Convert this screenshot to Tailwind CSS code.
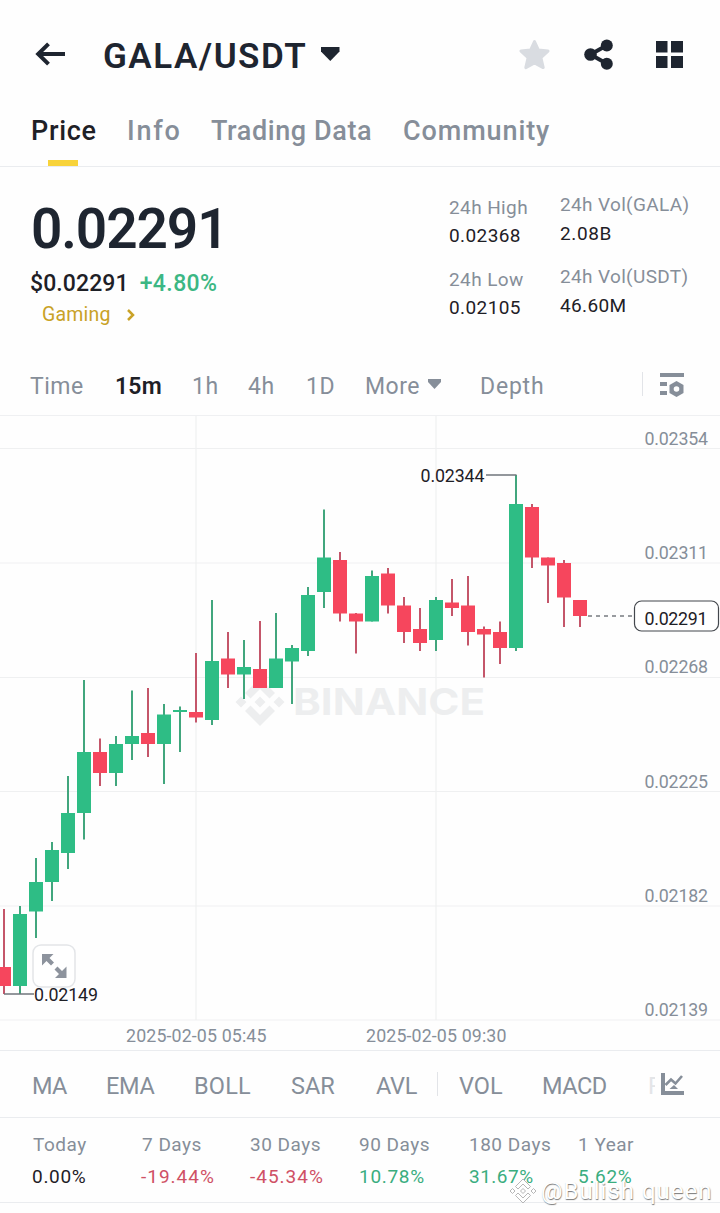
<!DOCTYPE html>
<html lang="en">
<head>
<meta charset="utf-8">
<title>GALA/USDT</title>
<script src="https://cdn.jsdelivr.net/npm/@tailwindcss/browser@4"></script>
</head>
<body class="bg-white">
<div class="relative flex h-[1213px] w-[720px] flex-col overflow-hidden bg-[#fefefe] font-['Roboto','Liberation_Sans',sans-serif] text-[#868e99]">

  <!-- Title bar -->
  <header class="flex h-[108px] items-center pl-[35px] pr-9 text-[#1e2530]">
    <svg class="h-6 w-[30px] flex-none" viewBox="0 0 30 24" fill="none" stroke="currentColor" stroke-width="4"><path d="M30 12H4M13.5 1.800 3.200 12l10.300 10.200"/></svg>
    <h1 class="ml-[38px] w-[206px] whitespace-nowrap text-[35px] leading-none font-semibold tracking-[1.5px] pt-[5px]">GALA/USDT</h1>
    <svg class="ml-3 h-[14px] w-[19px] flex-none" viewBox="0 0 19 14" fill="currentColor"><path d="M0 0h18.500v4.500L9.300 14 0 4.500z"/></svg>
    <svg class="ml-auto h-[31px] w-[31px] flex-none" viewBox="0 0 31 31" fill="#d9dce1" stroke="#d9dce1" stroke-width="3" stroke-linejoin="round"><path d="M15.500 2.500l3.900 8.600 9.600 1-7.100 6.500 2.300 10-8.700-4.600-8.700 4.600 2.300-10L2 12.100l9.600-1z"/></svg>
    <svg class="ml-[34px] h-[31px] w-[30px] flex-none" viewBox="0 0 30 31" fill="currentColor"><path d="M22.500 6.500 6.500 15.500l16 9" fill="none" stroke="currentColor" stroke-width="4"/><circle cx="6.500" cy="15.500" r="6.300"/><circle cx="22.800" cy="6.500" r="6"/><circle cx="22.800" cy="24.700" r="6"/></svg>
    <svg class="ml-[42px] mr-px h-[27px] w-[27px] flex-none" viewBox="0 0 27 27" fill="currentColor"><path d="M0 0h11.500v11.500H0zM15 0h12v11.500H15zM0 15h11.500v12H0zM15 15h12v12H15z"/></svg>
  </header>

  <!-- Tabs -->
  <nav class="flex h-[59px] flex-none border-b border-[#eaecef] pl-[31px] text-[27px] leading-[47px] font-medium whitespace-nowrap">
    <div class="flex w-[96px] flex-col text-[#1e2026]"><span class="h-[52px] tracking-[0.7px]">Price</span><i class="ml-[17px] h-[6px] w-[30px] bg-[#f8d33a]"></i></div>
    <div class="w-[84px] tracking-[1.8px]">Info</div>
    <div class="w-[192px] tracking-[0.6px]">Trading Data</div>
    <div class="tracking-[0.9px]">Community</div>
  </nav>

  <!-- Price summary -->
  <section class="flex h-[190px] flex-none pl-[31px]">
    <div class="w-[418px] pt-[32px]">
      <div class="h-[60px] text-[55px] leading-[60px] font-semibold tracking-[-1.1px] text-[#1e2530]">0.02291</div>
      <div class="mt-[10px] -ml-px flex h-[30px] gap-[11px] text-[23px] leading-[30px] font-medium"><span class="tracking-[0.1px] text-[#1e2026]">$0.02291</span><span class="tracking-[0.4px] text-[#3cb784]">+4.80%</span></div>
      <div class="ml-[11px] mt-[2px] flex h-[28px] items-center text-[19.5px] leading-[28px] tracking-[0.2px] text-[#c9a227]">Gaming<svg class="ml-[16px] h-[12px] w-[8px]" viewBox="0 0 8 12" fill="none" stroke="currentColor" stroke-width="2.500"><path d="M1 1l5 5-5 5"/></svg></div>
    </div>
    <dl class="w-[111px] pt-[27px] text-[19px] leading-[28px] tracking-[0.4px] whitespace-nowrap">
      <dt>24h High</dt><dd class="text-[#1e2026]">0.02368</dd>
      <dt class="mt-4">24h Low</dt><dd class="text-[#1e2026]">0.02105</dd>
    </dl>
    <dl class="pt-[23px] text-[19px] leading-[29px] tracking-[0.35px] whitespace-nowrap">
      <dt>24h Vol(GALA)</dt><dd class="tracking-[0.6px] text-[#1e2026]">2.08B</dd>
      <dt class="mt-[14px]">24h Vol(USDT)</dt><dd class="text-[#1e2026]">46.60M</dd>
    </dl>
  </section>

  <!-- Interval selector -->
  <nav class="flex h-[59px] flex-none border-b border-[#eff0f2] pl-[30px] text-[23px] leading-[59px] tracking-[0.5px] whitespace-nowrap">
    <span class="w-[85px]">Time</span>
    <span class="w-[77px] font-semibold tracking-[0.2px] text-[#1e2026]">15m</span>
    <span class="w-[56px]">1h</span>
    <span class="w-[58px]">4h</span>
    <span class="w-[59px]">1D</span>
    <span class="flex w-[115px]">More<svg class="mt-[22px] ml-2 h-[10px] w-[13px]" viewBox="0 0 13 10" fill="currentColor"><path d="M0 0h13v3L6.500 10 0 3z"/></svg></span>
    <span class="w-[162px] tracking-[0.8px]">Depth</span>
    <i class="mt-[15px] h-6 w-px bg-[#e2e4e8]"></i>
    <svg class="ml-[17px] mt-4 h-6 w-6" viewBox="0 0 24 24" fill="currentColor"><path d="M0 0h24v4H0zM0 9h7v4H0zM0 18h7v4H0z"/><path fill-rule="evenodd" d="M16.500 8l7 4v8l-7 4-7-4v-8zm0 5.200a2.800 2.800 0 1 0 0 5.600 2.800 2.800 0 0 0 0-5.600z"/></svg>
  </nav>

  <!-- Candlestick chart, drawn in page pixels -->
  <svg class="h-[634px] w-[720px] flex-none" viewBox="0 416 720 634" font-size="17.800">
    <path d="M0 448.500H720M0 563H720M0 677.500H720M0 791.500H720M0 906H720M0 1020H720M196 416V1020M436 416V1020" stroke="#eff0f1" stroke-width="1.200"/>
    <g fill="#edeeef">
      <g transform="translate(260 702)">
        <path d="M0-24l15 15-5.500 5.500L0-13l-9.500 9.500L-15-9zM0 24l15-15-5.500-5.500L0 13l-9.500-9.500L-15 9zM-19-5.500l5.500 5.500-5.500 5.500L-24.500 0zM19-5.500 24.500 0 19 5.500 13.500 0zM0-5.500 5.500 0 0 5.500-5.500 0z"/>
      </g>
      <text x="293" y="715" font-family="Inter" font-weight="700" font-size="37" textLength="192" lengthAdjust="spacingAndGlyphs">BINANCE</text>
    </g>
    <g id="candles"></g>
    <path d="M4 994H34M486 475H516.500" stroke="#70757c" stroke-width="1.300"/>
    <path d="M588 616H633" stroke="#777b80" stroke-width="1.500" stroke-dasharray="4 4"/>
    <rect x="634.500" y="601" width="84" height="30" rx="7" fill="#fff" stroke="#43474d" stroke-width="1.200"/>
    <g fill="#1e2026">
      <text x="420.500" y="482" textLength="64">0.02344</text>
      <text x="34" y="1001" textLength="64">0.02149</text>
      <text x="644.500" y="625" textLength="63">0.02291</text>
    </g>
    <g fill="#868e99">
      <text x="644.500" y="445" textLength="63.500">0.02354</text>
      <text x="644.500" y="559" textLength="63.500">0.02311</text>
      <text x="644.500" y="673" textLength="63.500">0.02268</text>
      <text x="644.500" y="788" textLength="63.500">0.02225</text>
      <text x="644.500" y="902" textLength="63.500">0.02182</text>
      <text x="644.500" y="1016" textLength="63.500">0.02139</text>
      <text x="126" y="1042" textLength="140.500">2025-02-05 05:45</text>
      <text x="366" y="1042" textLength="140.500">2025-02-05 09:30</text>
    </g>
    <rect x="33" y="945" width="42" height="42" rx="8" fill="#fff" stroke="#e3e5e8" stroke-width="1.500"/>
    <path d="M42 954h11.500l-4 4 4.500 4.500-3 3-4.500-4.500-4.500 4.500zM66.500 978H55l4-4-4.500-4.500 3-3 4.500 4.500 4.500-4.500z" fill="#8d939d"/>
  </svg>

  <!-- Indicators -->
  <nav class="flex h-[68px] flex-none border-y border-[#eaecef] pl-[32px] text-[23.5px] leading-[71px] whitespace-nowrap">
    <span class="w-[74px] tracking-[-0.8px]">MA</span>
    <span class="w-[88px] tracking-[-0.3px]">EMA</span>
    <span class="w-[97px] tracking-[0.2px]">BOLL</span>
    <span class="w-[85px]">SAR</span>
    <span class="w-[61px] tracking-[-0.3px]">AVL</span>
    <i class="mt-[21px] h-6 w-px bg-[#e2e4e8]"></i>
    <span class="ml-[21px] w-[83px]">VOL</span>
    <span class="w-[106px] tracking-[-0.5px]">MACD</span>
    <span class="w-[7px] overflow-hidden text-[#e3e5e8]">R</span>
    <svg class="ml-[6px] mt-[22px] h-[23px] w-[23px]" viewBox="0 0 23 23" fill="currentColor"><path d="M0 0h4v18h19v4H0z"/><path d="M4.500 12 10 6.500l4.500 4L21 3" fill="none" stroke="currentColor" stroke-width="2.600"/><path d="M8.500 16l4.500-4 4 4z"/></svg>
  </nav>

  <!-- Returns by period -->
  <section class="grid h-[85px] flex-none grid-cols-[109px_109px_109px_110px_109px_110px] content-start border-b border-[#eaecef] pl-[32px] pt-[13px] text-[19px] leading-[27px] tracking-[0.5px] whitespace-nowrap">
    <div class="pl-px">Today</div><div class="pl-px">7 Days</div><div>30 Days</div><div>90 Days</div><div>180 Days</div><div>1 Year</div>
    <div class="mt-[5px] tracking-[0.7px] text-[#1e2026]">0.00%</div>
    <div class="mt-[5px] tracking-[1px] text-[#cf5065]">-19.44%</div>
    <div class="mt-[5px] tracking-[1px] text-[#cf5065]">-45.34%</div>
    <div class="mt-[5px] tracking-[0.7px] text-[#3aad7f]">10.78%</div>
    <div class="mt-[5px] text-[#3aad7f]">31.67%</div>
    <div class="mt-[5px] tracking-[0.7px] text-[#3aad7f]">5.62%</div>
  </section>

  <!-- Author credit laid over the page -->
  <div class="absolute left-[509px] top-[1175px] flex h-8 items-center text-[24px] leading-8 whitespace-nowrap text-white [text-shadow:0.5px_0.5px_1px_#777]">
    <svg class="h-7 w-7" viewBox="-14 -14 28 28" fill="#fff" stroke="#a5a5a5" stroke-width="0.800"><path d="M0-12l7.500 7.500L5-2 0-7-5-2-7.500-4.500zM0 12l7.500-7.500L5 2 0 7-5 2-7.500 4.500zM-10.500-2.500L-8 0l-2.500 2.500L-13 0zM10.500-2.500L13 0l-2.500 2.500L8 0zM0-2.500L2.500 0 0 2.500-2.500 0z"/></svg>
    <span class="ml-1 tracking-[1px]">@Bulish queen</span>
  </div>
</div>
<script>
// [centre x, high, body top, body bottom, low, rising]
const candles = [
[4,909,967,986,994,0],[20,906,914,986,994,1],[36,858,882,911.5,938,1],[52,842,850,882,901,1],
[68,776,813,853,869,1],[84,680,752,813,839.5,1],[100,738.5,752,773,786,0],[116,736,744,773,786,1],
[132,690.5,736,744,760,1],[148,688,733,744,757,0],[164,704,714.5,744,784,1],[180,706.5,710,712,752,1],
[196,653,712,717.5,722.5,0],[212,600,661,720,725,1],[228,632,658.5,674.5,688,0],[244,640,667,674.5,699,1],
[260,621,669,688,688,0],[276,613,658.5,688,688,1],[292,645,648,661.5,704,1],[308,587,595,651,656,1],
[324,509.5,557.5,592,608,1],[340,552,560,613.5,621.5,0],[356,613,613.5,621.5,653.5,0],[372,570.5,576,621.5,621.5,1],
[388,568,573.5,605.5,613.5,0],[404,597,605.5,632,643,0],[420,608,629,643,651,0],[436,597,600,640,651,1],
[452,579,602.5,608,616,0],[468,576,605.5,632,645.5,0],[484,626.5,629,634.5,677.5,0],[500,621.5,632,648,664,0],
[516,475,504,648,651,1],[532,504,507,557.5,568,0],[548,557.5,557.5,565.5,603,0],[564,560,563,597.5,627,0],
[580,600,600,616,627,0]];
document.getElementById('candles').innerHTML = candles.map(([x, h, t, b, l, up]) =>
  `<rect x="${x - 1}" y="${h}" width="2" height="${l - h}" fill="${up ? '#41a67d' : '#c4566a'}"/>` +
  `<rect x="${x - 7}" y="${t}" width="14" height="${b - t}" fill="${up ? '#2ebd85' : '#f6465d'}"/>`).join('');
</script>
</body>
</html>
